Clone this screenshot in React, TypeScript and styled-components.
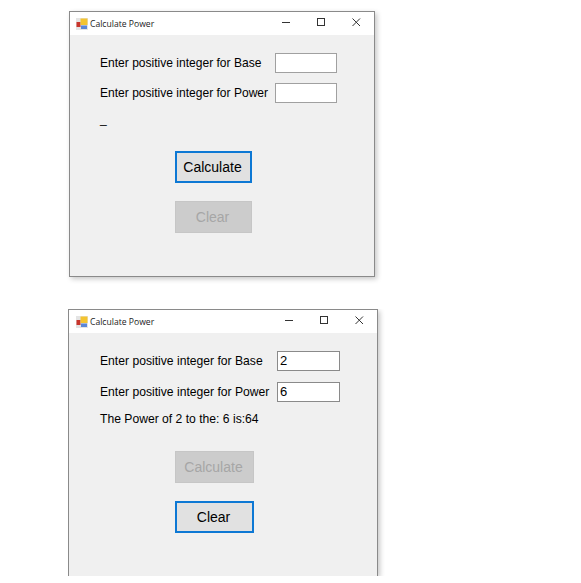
import styled, { createGlobalStyle } from "styled-components";

const GlobalStyle = createGlobalStyle`
  html, body {
    margin: 0;
    background: #ffffff;
  }
`;

const Page = styled.div`
  width: 581px;
  height: 583px;
  overflow: hidden;
  padding: 11px 0 0 69px;
  box-sizing: border-box;
  display: flex;
  flex-direction: column;
  align-items: flex-start;
  gap: 24px;
  font-family: "Liberation Sans", Arial, sans-serif;
`;

const Clip = styled.div`
  padding: 0 8px 8px 0;
  margin-right: -8px;
`;

const SecondClip = styled.div`
  height: 267px;
  margin-left: -1px;
  padding-right: 8px;
  overflow: hidden;
`;

const Window = styled.div<{ $width: number; $height: number; $open?: boolean }>`
  width: ${(p) => p.$width}px;
  height: ${(p) => p.$height}px;
  box-sizing: border-box;
  background: #f0f0f0;
  border: 1px solid #8a8a8a;
  border-bottom-width: ${(p) => (p.$open ? 0 : 1)}px;
  box-shadow: 2px 2px 5px rgba(0, 0, 0, 0.22);
  display: flex;
  flex-direction: column;
`;

const TitleBar = styled.div<{ $height: number; $left: number }>`
  height: ${(p) => p.$height}px;
  flex: none;
  background: #ffffff;
  display: flex;
  align-items: center;
  padding-left: ${(p) => p.$left}px;
`;

const AppIcon = styled.svg`
  width: 12px;
  height: 12px;
  flex: none;
  margin-right: 2px;
`;

const Title = styled.span`
  font-family: "Open Sans", "Noto Sans", sans-serif;
  font-size: 8.6px;
  color: #222222;
  flex: 1;
`;

const Controls = styled.div`
  display: flex;
  align-items: center;
  margin-bottom: 3px;
`;

const Control = styled.svg`
  width: 35px;
  height: 12px;
  stroke: #333333;
  stroke-width: 1;
  fill: none;
`;

const Body = styled.div<{ $labelWidth: number; $top: number; $left: number; $text: number }>`
  flex: 1;
  display: flex;
  flex-direction: column;
  padding: ${(p) => p.$top}px 0 0 ${(p) => p.$left}px;
  font-size: ${(p) => p.$text}px;
  color: #000000;
  --label-width: ${(p) => p.$labelWidth}px;
`;

const Row = styled.div<{ $gap: number }>`
  display: flex;
  align-items: center;
  height: 20px;
  margin-bottom: ${(p) => p.$gap}px;
`;

const Label = styled.label`
  width: var(--label-width);
  white-space: nowrap;
`;

const Field = styled.div<{ $width: number; $filled: boolean }>`
  width: ${(p) => p.$width}px;
  height: 20px;
  box-sizing: border-box;
  background: #ffffff;
  border: 1px solid ${(p) => (p.$filled ? "#8a8a8a" : "#a0a0a0")};
  font-size: 13px;
  line-height: 18px;
  padding-left: 2px;
`;

const Output = styled.div<{ $top: number; $bottom: number }>`
  margin-top: ${(p) => p.$top}px;
  margin-bottom: ${(p) => p.$bottom}px;
  line-height: 14px;
`;

const ButtonStack = styled.div<{ $left: number; $width: number }>`
  display: flex;
  flex-direction: column;
  gap: 18px;
  margin-left: ${(p) => p.$left}px;
  width: ${(p) => p.$width}px;
`;

const FormButton = styled.button<{ $active?: boolean }>`
  height: 32px;
  box-sizing: border-box;
  padding: 0 2px 1px 0;
  font-family: "Liberation Sans", Arial, sans-serif;
  font-size: 14px;
  border-radius: 0;
  color: ${(p) => (p.$active ? "#000000" : "#a6a6a6")};
  background: ${(p) => (p.$active ? "#e1e1e1" : "#cccccc")};
  border: ${(p) => (p.$active ? "2px solid #0d78d4" : "1px solid #c6c6c6")};
`;

function PowerIcon() {
  return (
    <AppIcon viewBox="0 0 12 12">
      <rect x="0" y="0" width="12" height="12" fill="#e4e4e4" />
      <rect x="0.5" y="4" width="4" height="5" fill="#c8352c" />
      <rect x="4.5" y="0.5" width="7" height="6.5" fill="#f4c430" />
      <rect x="5" y="7.5" width="6" height="3.5" fill="#5b86d6" />
    </AppIcon>
  );
}

function WindowControls() {
  return (
    <Controls>
      <Control viewBox="0 0 35 12">
        <path d="M13 6.5h8" />
      </Control>
      <Control viewBox="0 0 35 12">
        <rect x="13.5" y="2.5" width="7" height="7" />
      </Control>
      <Control viewBox="0 0 35 12">
        <path d="M13.5 2.5l7.5 7.5M21 2.5l-7.5 7.5" />
      </Control>
    </Controls>
  );
}

type PowerWindowProps = {
  width: number;
  height: number;
  titleHeight: number;
  titleLeft: number;
  bodyTop: number;
  bodyLeft: number;
  textSize: number;
  labelWidth: number;
  fieldWidth: number;
  rowGap: number;
  base: string;
  power: string;
  result: string;
  resultTop: number;
  resultBottom: number;
  buttonLeft: number;
  buttonWidth: number;
  cleared: boolean;
  open?: boolean;
};

function PowerWindow(props: PowerWindowProps) {
  return (
    <Window $width={props.width} $height={props.height} $open={props.open}>
      <TitleBar $height={props.titleHeight} $left={props.titleLeft}>
        <PowerIcon />
        <Title>Calculate Power</Title>
        <WindowControls />
      </TitleBar>
      <Body
        $labelWidth={props.labelWidth}
        $top={props.bodyTop}
        $left={props.bodyLeft}
        $text={props.textSize}
      >
        <Row $gap={props.rowGap}>
          <Label>Enter positive integer for Base</Label>
          <Field $width={props.fieldWidth} $filled={props.base !== ""}>
            {props.base}
          </Field>
        </Row>
        <Row $gap={props.rowGap}>
          <Label>Enter positive integer for Power</Label>
          <Field $width={props.fieldWidth} $filled={props.power !== ""}>
            {props.power}
          </Field>
        </Row>
        <Output $top={props.resultTop} $bottom={props.resultBottom}>
          {props.result}
        </Output>
        <ButtonStack $left={props.buttonLeft} $width={props.buttonWidth}>
          <FormButton $active={props.cleared}>Calculate</FormButton>
          <FormButton $active={!props.cleared}>Clear</FormButton>
        </ButtonStack>
      </Body>
    </Window>
  );
}

export default function App() {
  return (
    <Page>
      <GlobalStyle />
      <Clip>
        <PowerWindow
          width={306}
          height={266}
          titleHeight={23}
          titleLeft={6}
          bodyTop={18}
          bodyLeft={30}
          textSize={12.05}
          labelWidth={175}
          fieldWidth={62}
          rowGap={10}
          base=""
          power=""
          result="_"
          resultTop={-1}
          resultBottom={25}
          buttonLeft={75}
          buttonWidth={77}
          cleared
        />
      </Clip>
      <SecondClip>
        <PowerWindow
          width={310}
          height={267}
          titleHeight={23}
          titleLeft={7}
          bodyTop={18}
          bodyLeft={31}
          textSize={12.15}
          labelWidth={177}
          fieldWidth={63}
          rowGap={11}
          base="2"
          power="6"
          result="The Power of 2 to the: 6 is:64"
          resultTop={-1}
          resultBottom={25}
          buttonLeft={75}
          buttonWidth={79}
          cleared={false}
          open
        />
      </SecondClip>
    </Page>
  );
}
